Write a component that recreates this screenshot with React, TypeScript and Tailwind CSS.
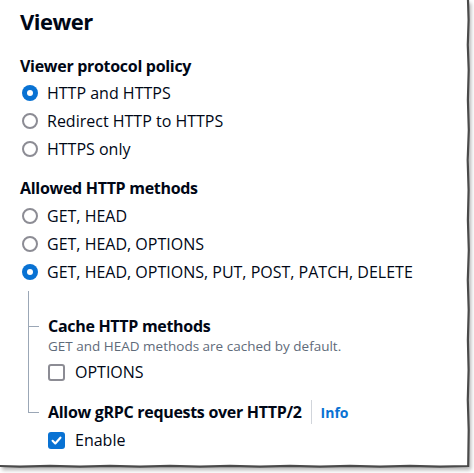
import React from "react";

const font = { fontFamily: '"Open Sans", "Noto Sans", sans-serif' };

function Radio({ checked, label }: { checked?: boolean; label: string }) {
  return (
    <div className="flex items-center h-7">
      {checked ? (
        <span className="w-[16px] h-[16px] rounded-full bg-[#0972d3] flex items-center justify-center shrink-0">
          <span className="w-[6px] h-[6px] rounded-full bg-white" />
        </span>
      ) : (
        <span className="w-[16px] h-[16px] rounded-full border-2 border-[#8c8c94] bg-white shrink-0" />
      )}
      <span className="ml-[9px] text-[16px] text-[#000716]">{label}</span>
    </div>
  );
}

function Checkbox({ checked, label }: { checked?: boolean; label: string }) {
  return (
    <div className="flex items-center h-7">
      {checked ? (
        <span className="w-[17px] h-[17px] rounded-[3px] bg-[#0972d3] flex items-center justify-center shrink-0">
          <svg width="13" height="13" viewBox="0 0 12 12">
            <path d="M2.4 6.3 L4.9 8.7 L9.6 3.4" fill="none" stroke="white" strokeWidth="2" strokeLinecap="round" strokeLinejoin="round" />
          </svg>
        </span>
      ) : (
        <span className="w-[17px] h-[17px] rounded-[3px] border-2 border-[#8c8c94] bg-white shrink-0" />
      )}
      <span className="ml-[10px] text-[16px] text-[#000716]">{label}</span>
    </div>
  );
}

export default function App() {
  return (
    <div className="relative w-[474px] h-[473px] bg-white overflow-hidden" style={font}>
      <div className="absolute left-0 top-0 w-[469px] h-[467px] shadow-[2px_3px_4px_rgba(0,0,0,0.3)] bg-white" />
      <svg className="absolute left-0 top-0" width="474" height="473">
        <path
          d="M468 0 L468.6 20 L467.8 45 L468.7 70 L467.9 100 L468.8 130 L467.7 160 L468.6 190 L467.9 220 L468.8 250 L467.8 280 L468.7 310 L467.9 340 L468.6 370 L467.8 400 L468.7 430 L468.2 466 L440 466.6 L410 465.8 L380 466.7 L350 465.9 L320 466.6 L290 465.8 L260 466.7 L230 465.9 L200 466.6 L170 465.8 L140 466.7 L110 465.9 L80 466.6 L50 465.8 L20 466.6 L0 466"
          fill="none"
          stroke="#4a4a4a"
          strokeWidth="2.2"
        />
      </svg>
      <div className="relative pl-[20px] pt-[7px] text-[#000716]">
        <h2 className="text-[22px] leading-[28px] font-bold tracking-[-0.5px]">Viewer</h2>
        <div className="mt-[21px] text-[16px] leading-[20px] font-bold tracking-[-0.3px]">Viewer protocol policy</div>
        <div className="mt-[3px] pl-[2px]">
          <Radio checked label="HTTP and HTTPS" />
          <Radio label="Redirect HTTP to HTTPS" />
          <Radio label="HTTPS only" />
        </div>
        <div className="mt-[15px] text-[16px] leading-[20px] font-bold tracking-[-0.3px]">Allowed HTTP methods</div>
        <div className="mt-[4px] pl-[2px]">
          <Radio label="GET, HEAD" />
          <Radio label="GET, HEAD, OPTIONS" />
          <Radio checked label="GET, HEAD, OPTIONS, PUT, POST, PATCH, DELETE" />
        </div>
        <div className="flex">
          <div className="relative w-[28px] shrink-0">
            <div className="absolute left-[8px] top-[5px] h-[121px] w-px bg-[#9ba7b6]" />
            <div className="absolute left-[8px] top-[40px] w-[11px] h-px bg-[#9ba7b6]" />
            <div className="absolute left-[8px] top-[126px] w-[11px] h-px bg-[#9ba7b6]" />
          </div>
          <div className="pt-[30px]">
            <div className="text-[16px] leading-[20px] font-bold tracking-[-0.3px]">Cache HTTP methods</div>
            <div className="text-[13.5px] leading-[18px] text-[#5f6b7a] mt-[1px]">GET and HEAD methods are cached by default.</div>
            <div className="mt-[3px]">
              <Checkbox label="OPTIONS" />
            </div>
            <div className="mt-[14px] flex items-center">
              <span className="text-[16px] leading-[20px] font-bold tracking-[-0.3px]">Allow gRPC requests over HTTP/2</span>
              <span className="mx-[9px] w-px h-[24px] bg-[#d1d5db]" />
              <span className="text-[14px] font-bold text-[#0972d3]">Info</span>
            </div>
            <div className="mt-[2px]">
              <Checkbox checked label="Enable" />
            </div>
          </div>
        </div>
      </div>
    </div>
  );
}
